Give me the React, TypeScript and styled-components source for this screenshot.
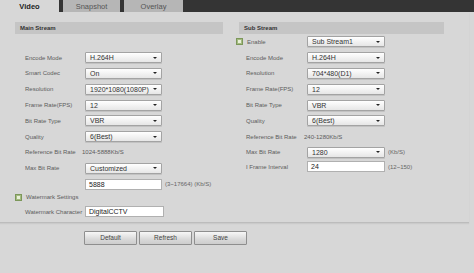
import React from 'react';
import styled, { createGlobalStyle } from 'styled-components';

const GlobalStyle = createGlobalStyle`
    html, body {
        margin: 0;
        padding: 0;
        background: #d7d7d7;
        overflow: hidden;
    }
    body {
        font-family: "Liberation Sans", Arial, sans-serif;
    }
`;

const Root = styled.div`
    width: 474px;
    height: 273px;
    background: #d7d7d7;
    display: flex;
    flex-direction: column;
`;

const TabBar = styled.div`
    height: 12px;
    background: #343434;
    display: flex;
    gap: 4px;
`;

const Tab = styled.div<{ $active?: boolean; $w: number }>`
    width: ${p => p.$w}px;
    height: 12px;
    line-height: 13px;
    text-align: center;
    font-size: 7.5px;
    font-weight: ${p => (p.$active ? 'bold' : 'normal')};
    color: ${p => (p.$active ? '#222' : '#555')};
    background: ${p => (p.$active ? '#d7d7d7' : '#b6b6b6')};
`;

const Content = styled.div`
    height: 211px;
    display: flex;
    border-bottom: 1px solid #bcbcbc;
    box-shadow: 0 1px 1px #cacaca;
    margin-right: 5px;
    padding-top: 10px;
    box-sizing: border-box;
`;

const Column = styled.div<{ $left: number; $w: number }>`
    margin-left: ${p => p.$left}px;
    width: ${p => p.$w}px;
    display: flex;
    flex-direction: column;
`;

const SectionHead = styled.div`
    height: 12px;
    line-height: 12px;
    background: #c5c5c5;
    font-size: 6px;
    font-weight: bold;
    color: #333;
    padding-left: 5px;
`;

const Row = styled.div<{ $lw: number; $h?: number }>`
    height: ${p => p.$h ?? 15.8}px;
    display: grid;
    grid-template-columns: ${p => p.$lw}px auto 1fr;
    align-items: center;
    column-gap: 4px;
`;

const Label = styled.div<{ $pad: number }>`
    padding-left: ${p => p.$pad}px;
    font-size: 6px;
    color: #5c5c5c;
    white-space: nowrap;
    display: flex;
    align-items: center;
`;

const SelectBox = styled.div<{ $w: number }>`
    width: ${p => p.$w}px;
    height: 11px;
    box-sizing: border-box;
    border: 1px solid #a3a3a3;
    border-radius: 1px;
    background: linear-gradient(#ffffff, #e6e6e6);
    box-shadow: 0 1px 0 #c2c2c2;
    display: flex;
    align-items: center;
    justify-content: space-between;
    padding: 0 4px 0 4px;
    font-size: 7px;
    color: #333;
    white-space: nowrap;
`;

const Arrow = styled.span`
    width: 0;
    height: 0;
    border-left: 2px solid transparent;
    border-right: 2px solid transparent;
    border-top: 2.5px solid #222;
`;

const TextInput = styled.div<{ $w: number }>`
    width: ${p => p.$w}px;
    height: 11px;
    box-sizing: border-box;
    border: 1px solid #b0b0b0;
    background: #fff;
    font-size: 7px;
    color: #222;
    padding-left: 3px;
    line-height: 9px;
    white-space: nowrap;
`;

const Value = styled.div`
    margin-left: -3px;
    font-size: 6px;
    color: #5c5c5c;
    white-space: nowrap;
`;

const Hint = styled.div`
    font-size: 6px;
    color: #666;
    white-space: nowrap;
    margin-left: -1px;
`;

const Check = styled.span<{ $shift?: number }>`
    width: 7px;
    height: 7px;
    box-sizing: border-box;
    margin-left: ${p => p.$shift ?? 0}px;
    margin-right: 4px;
    border: 1px solid #7c975a;
    background: #a4bb80;
    display: flex;
    align-items: center;
    justify-content: center;
    &::after {
        content: '';
        width: 3px;
        height: 3px;
        background: #e8f0d8;
    }
`;

const Buttons = styled.div`
    display: flex;
    gap: 2px;
    padding: 8px 0 0 84px;
`;

const Button = styled.div`
    width: 53px;
    height: 14px;
    box-sizing: border-box;
    border: 1px solid #8e8e8e;
    border-radius: 1px;
    background: linear-gradient(#f7f7f7, #d9d9d9 60%, #cdcdcd);
    font-size: 6.5px;
    color: #444;
    text-align: center;
    line-height: 12px;
`;

const Select = ({ w, value }: { w: number; value: string }) => (
    <SelectBox $w={w}>
        <span>{value}</span>
        <Arrow />
    </SelectBox>
);

const leftSelects: [string, string][] = [
    ['Encode Mode', 'H.264H'],
    ['Smart Codec', 'On'],
    ['Resolution', '1920*1080(1080P)'],
    ['Frame Rate(FPS)', '12'],
    ['Bit Rate Type', 'VBR'],
    ['Quality', '6(Best)'],
];

const rightSelects: [string, string][] = [
    ['Encode Mode', 'H.264H'],
    ['Resolution', '704*480(D1)'],
    ['Frame Rate(FPS)', '12'],
    ['Bit Rate Type', 'VBR'],
    ['Quality', '6(Best)'],
];

const App = () => {
    return (
        <Root>
            <GlobalStyle />
            <TabBar>
                <Tab $active $w={59}>Video</Tab>
                <Tab $w={57}>Snapshot</Tab>
                <Tab $w={59}>Overlay</Tab>
            </TabBar>
            <Content>
                <Column $left={15} $w={208}>
                    <SectionHead>Main Stream</SectionHead>
                    <Row $lw={66} />
                    {leftSelects.map(([label, value]) => (
                        <Row $lw={66} key={label}>
                            <Label $pad={10}>{label}</Label>
                            <Select w={77} value={value} />
                        </Row>
                    ))}
                    <Row $lw={66}>
                        <Label $pad={10}>Reference Bit Rate</Label>
                        <Value>1024-5888Kb/S</Value>
                    </Row>
                    <Row $lw={66}>
                        <Label $pad={10}>Max Bit Rate</Label>
                        <Select w={77} value="Customized" />
                    </Row>
                    <Row $lw={66}>
                        <Label $pad={10} />
                        <TextInput $w={77}>5888</TextInput>
                        <Hint>(3~17664) (Kb/S)</Hint>
                    </Row>
                    <Row $lw={66} $h={11}>
                        <Label $pad={0}>
                            <Check />
                            Watermark Settings
                        </Label>
                    </Row>
                    <Row $lw={66} $h={18}>
                        <Label $pad={10}>Watermark Character</Label>
                        <TextInput $w={79}>DigitalCCTV</TextInput>
                    </Row>
                </Column>
                <Column $left={16} $w={205}>
                    <SectionHead>Sub Stream</SectionHead>
                    <Row $lw={64}>
                        <Label $pad={0}>
                            <Check $shift={-3} />
                            Enable
                        </Label>
                        <Select w={78} value="Sub Stream1" />
                    </Row>
                    {rightSelects.map(([label, value]) => (
                        <Row $lw={64} key={label}>
                            <Label $pad={7}>{label}</Label>
                            <Select w={78} value={value} />
                        </Row>
                    ))}
                    <Row $lw={64}>
                        <Label $pad={7}>Reference Bit Rate</Label>
                        <Value>240-1280Kb/S</Value>
                    </Row>
                    <Row $lw={64} $h={15}>
                        <Label $pad={7}>Max Bit Rate</Label>
                        <Select w={78} value="1280" />
                        <Hint>(Kb/S)</Hint>
                    </Row>
                    <Row $lw={64} $h={14}>
                        <Label $pad={7}>I Frame Interval</Label>
                        <TextInput $w={78}>24</TextInput>
                        <Hint>(12~150)</Hint>
                    </Row>
                </Column>
            </Content>
            <Buttons>
                <Button>Default</Button>
                <Button>Refresh</Button>
                <Button>Save</Button>
            </Buttons>
        </Root>
    );
};

export default App;
